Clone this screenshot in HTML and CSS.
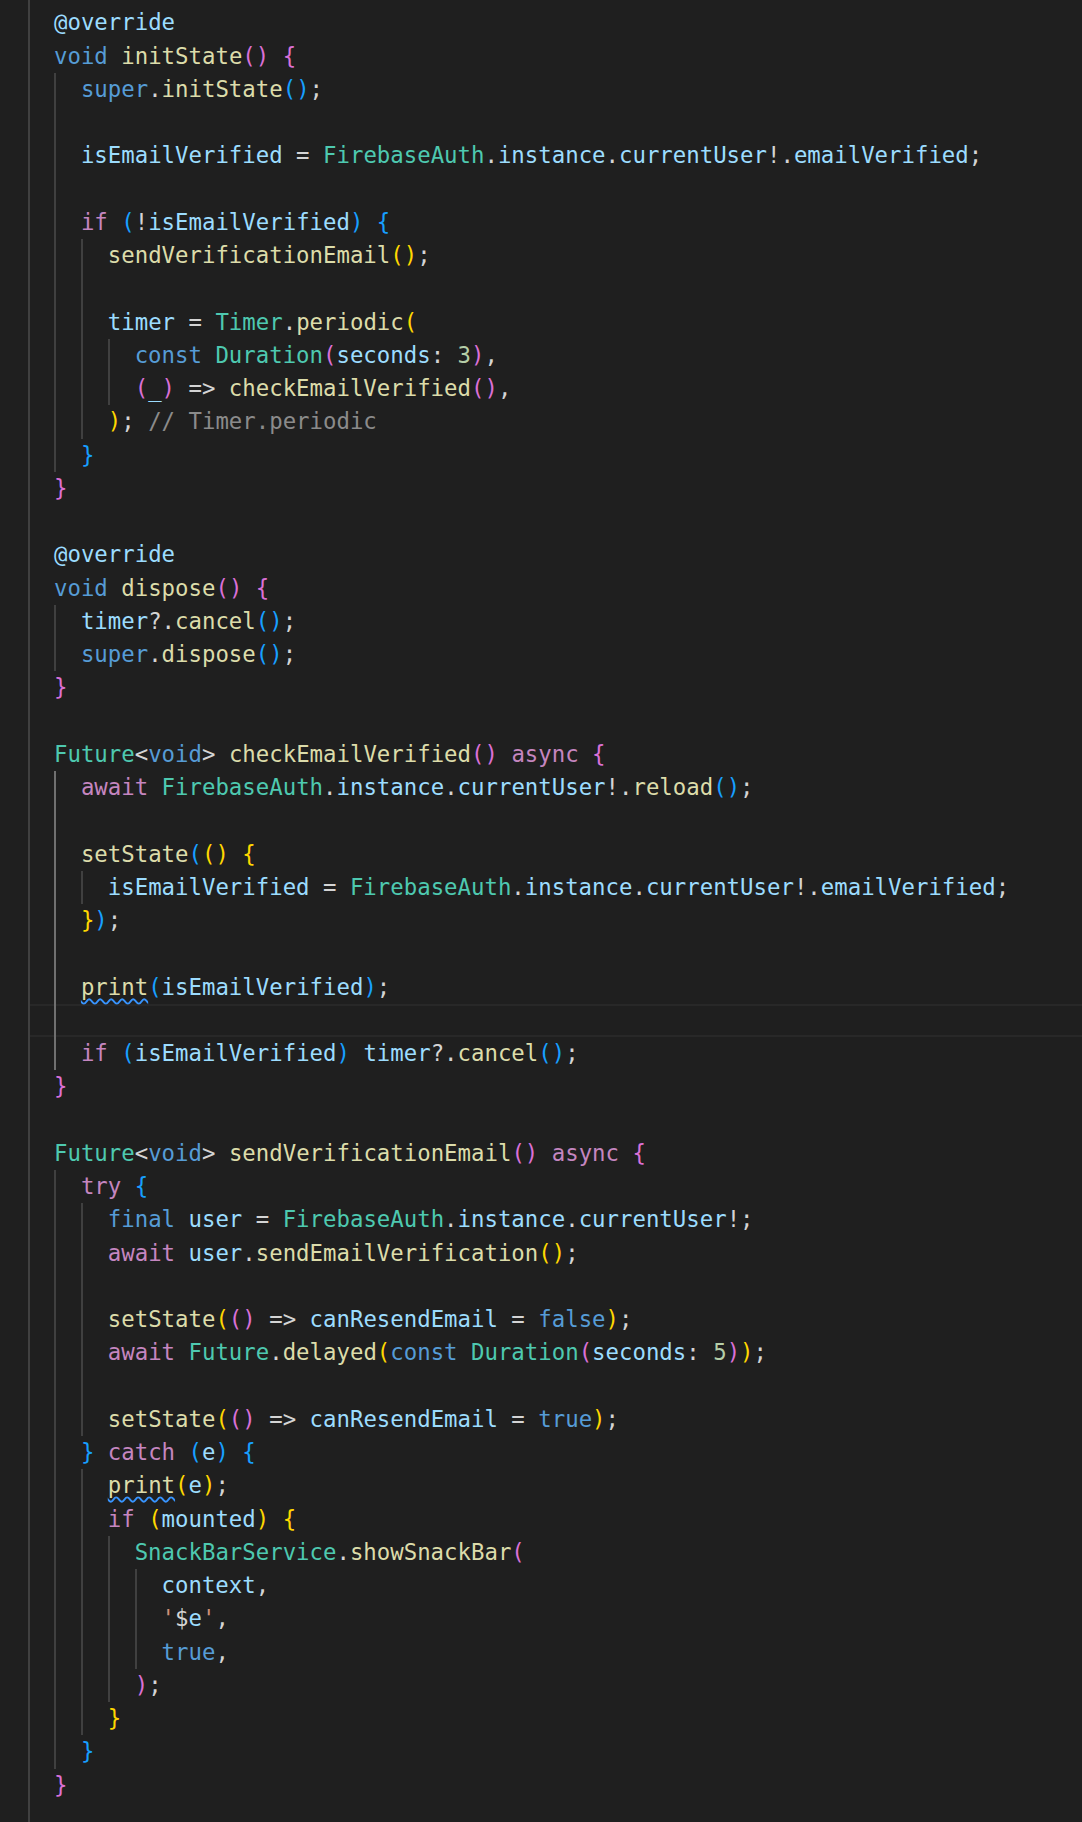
FILE: index.html
```html
<!DOCTYPE html>
<html lang="en">
<head>
  <meta charset="UTF-8">
  <title>email_verify_page.dart</title>
  <link rel="stylesheet" href="styles.css">
</head>
<body>
  <!-- editor view: one .ln per source line, indent guides drawn by .g spans -->
  <div class="editor">
    <div class="ln"><i class="i0"></i><span class="v">@override</span></div>
    <div class="ln"><i class="i0"></i><span class="st">void</span> <span class="fn">initState</span><span class="b2">()</span> <span class="b2">{</span></div>
    <div class="ln"><i class="i0"></i><i class="g"></i><span class="st">super</span>.<span class="fn">initState</span><span class="b3">()</span>;</div>
    <div class="ln"><i class="i0"></i><i class="g"></i></div>
    <div class="ln"><i class="i0"></i><i class="g"></i><span class="v">isEmailVerified</span> = <span class="t">FirebaseAuth</span>.<span class="v">instance</span>.<span class="v">currentUser</span>!.<span class="v">emailVerified</span>;</div>
    <div class="ln"><i class="i0"></i><i class="g"></i></div>
    <div class="ln"><i class="i0"></i><i class="g"></i><span class="kw">if</span> <span class="b3">(</span>!<span class="v">isEmailVerified</span><span class="b3">)</span> <span class="b3">{</span></div>
    <div class="ln"><i class="i0"></i><i class="g"></i><i class="g"></i><span class="fn">sendVerificationEmail</span><span class="b1">()</span>;</div>
    <div class="ln"><i class="i0"></i><i class="g"></i><i class="g"></i></div>
    <div class="ln"><i class="i0"></i><i class="g"></i><i class="g"></i><span class="v">timer</span> = <span class="t">Timer</span>.<span class="fn">periodic</span><span class="b1">(</span></div>
    <div class="ln"><i class="i0"></i><i class="g"></i><i class="g"></i><i class="g"></i><span class="st">const</span> <span class="t">Duration</span><span class="b2">(</span><span class="v">seconds</span>: <span class="n">3</span><span class="b2">)</span>,</div>
    <div class="ln"><i class="i0"></i><i class="g"></i><i class="g"></i><i class="g"></i><span class="b2">(</span><span class="v">_</span><span class="b2">)</span> =&gt; <span class="fn">checkEmailVerified</span><span class="b2">()</span>,</div>
    <div class="ln"><i class="i0"></i><i class="g"></i><i class="g"></i><span class="b1">)</span>; <span class="cm">// Timer.periodic</span></div>
    <div class="ln"><i class="i0"></i><i class="g"></i><span class="b3">}</span></div>
    <div class="ln"><i class="i0"></i><span class="b2">}</span></div>
    <div class="ln"><i class="i0"></i></div>
    <div class="ln"><i class="i0"></i><span class="v">@override</span></div>
    <div class="ln"><i class="i0"></i><span class="st">void</span> <span class="fn">dispose</span><span class="b2">()</span> <span class="b2">{</span></div>
    <div class="ln"><i class="i0"></i><i class="g"></i><span class="v">timer</span>?.<span class="fn">cancel</span><span class="b3">()</span>;</div>
    <div class="ln"><i class="i0"></i><i class="g"></i><span class="st">super</span>.<span class="fn">dispose</span><span class="b3">()</span>;</div>
    <div class="ln"><i class="i0"></i><span class="b2">}</span></div>
    <div class="ln"><i class="i0"></i></div>
    <div class="ln"><i class="i0"></i><span class="t">Future</span>&lt;<span class="st">void</span>&gt; <span class="fn">checkEmailVerified</span><span class="b2">()</span> <span class="kw">async</span> <span class="b2">{</span></div>
    <div class="ln"><i class="i0"></i><i class="g a"></i><span class="kw">await</span> <span class="t">FirebaseAuth</span>.<span class="v">instance</span>.<span class="v">currentUser</span>!.<span class="fn">reload</span><span class="b3">()</span>;</div>
    <div class="ln"><i class="i0"></i><i class="g a"></i></div>
    <div class="ln"><i class="i0"></i><i class="g a"></i><span class="fn">setState</span><span class="b3">(</span><span class="b1">()</span> <span class="b1">{</span></div>
    <div class="ln"><i class="i0"></i><i class="g a"></i><i class="g"></i><span class="v">isEmailVerified</span> = <span class="t">FirebaseAuth</span>.<span class="v">instance</span>.<span class="v">currentUser</span>!.<span class="v">emailVerified</span>;</div>
    <div class="ln"><i class="i0"></i><i class="g a"></i><span class="b1">}</span><span class="b3">)</span>;</div>
    <div class="ln"><i class="i0"></i><i class="g a"></i></div>
    <div class="ln"><i class="i0"></i><i class="g a"></i><span class="fn sq">print</span><span class="b3">(</span><span class="v">isEmailVerified</span><span class="b3">)</span>;</div>
    <div class="ln cur"><i class="i0"></i><i class="g a"></i></div>
    <div class="ln"><i class="i0"></i><i class="g a"></i><span class="kw">if</span> <span class="b3">(</span><span class="v">isEmailVerified</span><span class="b3">)</span> <span class="v">timer</span>?.<span class="fn">cancel</span><span class="b3">()</span>;</div>
    <div class="ln"><i class="i0"></i><span class="b2">}</span></div>
    <div class="ln"><i class="i0"></i></div>
    <div class="ln"><i class="i0"></i><span class="t">Future</span>&lt;<span class="st">void</span>&gt; <span class="fn">sendVerificationEmail</span><span class="b2">()</span> <span class="kw">async</span> <span class="b2">{</span></div>
    <div class="ln"><i class="i0"></i><i class="g"></i><span class="kw">try</span> <span class="b3">{</span></div>
    <div class="ln"><i class="i0"></i><i class="g"></i><i class="g"></i><span class="st">final</span> <span class="v">user</span> = <span class="t">FirebaseAuth</span>.<span class="v">instance</span>.<span class="v">currentUser</span>!;</div>
    <div class="ln"><i class="i0"></i><i class="g"></i><i class="g"></i><span class="kw">await</span> <span class="v">user</span>.<span class="fn">sendEmailVerification</span><span class="b1">()</span>;</div>
    <div class="ln"><i class="i0"></i><i class="g"></i><i class="g"></i></div>
    <div class="ln"><i class="i0"></i><i class="g"></i><i class="g"></i><span class="fn">setState</span><span class="b1">(</span><span class="b2">()</span> =&gt; <span class="v">canResendEmail</span> = <span class="st">false</span><span class="b1">)</span>;</div>
    <div class="ln"><i class="i0"></i><i class="g"></i><i class="g"></i><span class="kw">await</span> <span class="t">Future</span>.<span class="fn">delayed</span><span class="b1">(</span><span class="st">const</span> <span class="t">Duration</span><span class="b2">(</span><span class="v">seconds</span>: <span class="n">5</span><span class="b2">)</span><span class="b1">)</span>;</div>
    <div class="ln"><i class="i0"></i><i class="g"></i><i class="g"></i></div>
    <div class="ln"><i class="i0"></i><i class="g"></i><i class="g"></i><span class="fn">setState</span><span class="b1">(</span><span class="b2">()</span> =&gt; <span class="v">canResendEmail</span> = <span class="st">true</span><span class="b1">)</span>;</div>
    <div class="ln"><i class="i0"></i><i class="g"></i><span class="b3">}</span> <span class="kw">catch</span> <span class="b3">(</span><span class="v">e</span><span class="b3">)</span> <span class="b3">{</span></div>
    <div class="ln"><i class="i0"></i><i class="g"></i><i class="g"></i><span class="fn sq">print</span><span class="b1">(</span><span class="v">e</span><span class="b1">)</span>;</div>
    <div class="ln"><i class="i0"></i><i class="g"></i><i class="g"></i><span class="kw">if</span> <span class="b1">(</span><span class="v">mounted</span><span class="b1">)</span> <span class="b1">{</span></div>
    <div class="ln"><i class="i0"></i><i class="g"></i><i class="g"></i><i class="g"></i><span class="t">SnackBarService</span>.<span class="fn">showSnackBar</span><span class="b2">(</span></div>
    <div class="ln"><i class="i0"></i><i class="g"></i><i class="g"></i><i class="g"></i><i class="g"></i><span class="v">context</span>,</div>
    <div class="ln"><i class="i0"></i><i class="g"></i><i class="g"></i><i class="g"></i><i class="g"></i><span class="s">'</span>$<span class="v">e</span><span class="s">'</span>,</div>
    <div class="ln"><i class="i0"></i><i class="g"></i><i class="g"></i><i class="g"></i><i class="g"></i><span class="st">true</span>,</div>
    <div class="ln"><i class="i0"></i><i class="g"></i><i class="g"></i><i class="g"></i><span class="b2">)</span>;</div>
    <div class="ln"><i class="i0"></i><i class="g"></i><i class="g"></i><span class="b1">}</span></div>
    <div class="ln"><i class="i0"></i><i class="g"></i><span class="b3">}</span></div>
    <div class="ln"><i class="i0"></i><span class="b2">}</span></div>
    <div class="ln"><i class="i0"></i></div>
  </div>
</body>
</html>
```

FILE: styles.css
```css
body { margin: 0; background: #1f1f1f; color: #d4d4d4; font-family: "DejaVu Sans Mono", monospace; font-size: 22.35px; }

/* outer guide of the class body is the editor's own left border */
.editor { margin-left: 28px; border-left: 2px solid #404040; min-height: 100vh; box-sizing: border-box; padding-top: 6.4px; overflow: hidden; }

.ln { height: 33.25px; line-height: 33.25px; white-space: pre; }
.ln.cur { box-shadow: inset 0 2px #282828, inset 0 -2px #282828; }

/* indentation units */
.i0 { display: inline-block; width: 24px; }
.g { display: inline-block; width: 2ch; height: 33.25px; vertical-align: top; box-shadow: inset 2px 0 #404040; }
.g.a { box-shadow: inset 2px 0 #707070; }

/* tokens */
.kw { color: #c586c0; }
.st { color: #569cd6; }
.fn { color: #dcdcaa; }
.v { color: #9cdcfe; }
.t { color: #4ec9b0; }
.n { color: #b5cea8; }
.s { color: #ce9178; }
.cm { color: #8b8b8b; }

/* bracket pair colours */
.b1 { color: #ffd700; }
.b2 { color: #da70d6; }
.b3 { color: #179fff; }

.sq { text-decoration: underline wavy #3794ff; text-decoration-thickness: 1.5px; text-underline-offset: 3px; text-decoration-skip-ink: none; }
```
